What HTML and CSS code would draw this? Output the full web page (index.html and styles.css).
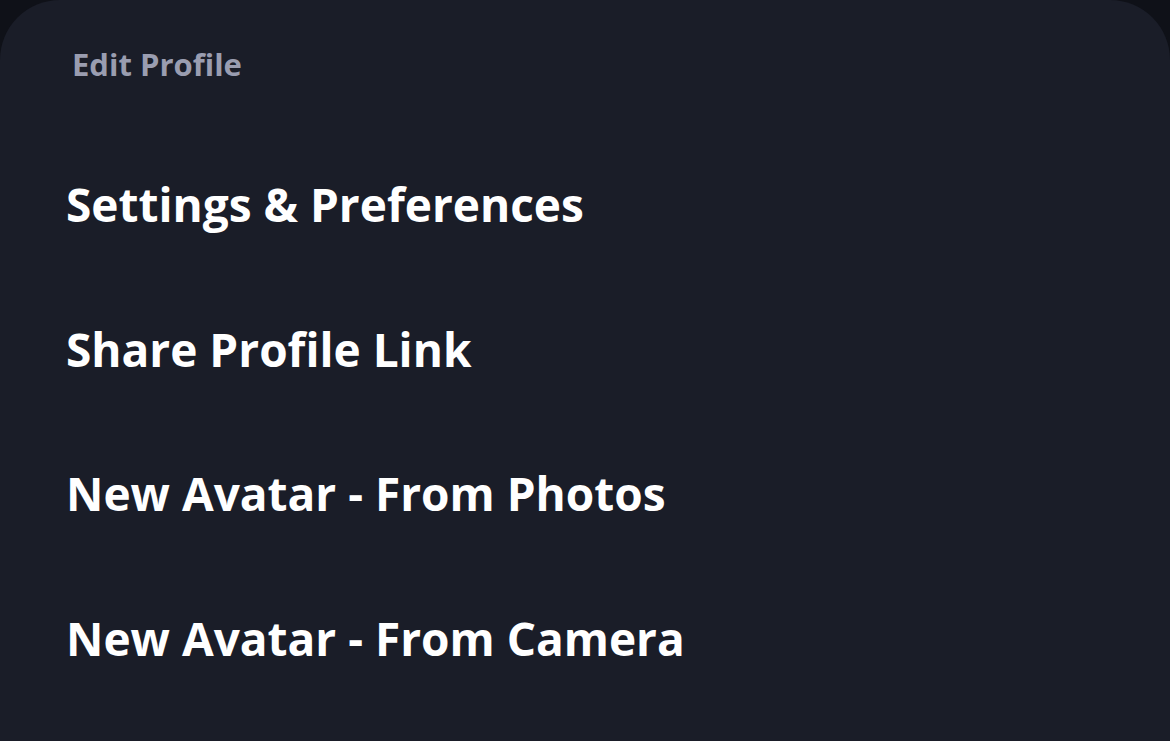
FILE: index.html
```html
<!DOCTYPE html>
<html>
<head>
<meta charset="utf-8">
<link rel="stylesheet" href="styles.css">
</head>
<body>
<div class="sheet">
  <div class="title">Edit Profile</div>
  <ul class="menu">
    <li class="item">Settings &amp; Preferences</li>
    <li class="item">Share Profile Link</li>
    <li class="item">New Avatar - From Photos</li>
    <li class="item">New Avatar - From Camera</li>
  </ul>
</div>
</body>
</html>
```
FILE: styles.css
```css
html, body {
  margin: 0;
  padding: 0;
  height: 100%;
  background: #0f1118;
  overflow: hidden;
}
.sheet {
  height: 100%;
  box-sizing: border-box;
  background: #1a1d28;
  border-radius: 60px 60px 0 0;
  padding: 44px 0 0 66px;
  font-family: "Open Sans", "Noto Sans", sans-serif;
  font-weight: 700;
  font-variant-ligatures: none;
}
.title {
  font-size: 31px;
  line-height: 40px;
  color: #9a9db0;
  padding-left: 6px;
}
.menu {
  list-style: none;
  margin: 0;
  padding: 0;
  margin-top: 90px;
  display: flex;
  flex-direction: column;
}
.item {
  font-size: 46px;
  line-height: 60px;
  height: 144.5px;
  color: #ffffff;
}
```
